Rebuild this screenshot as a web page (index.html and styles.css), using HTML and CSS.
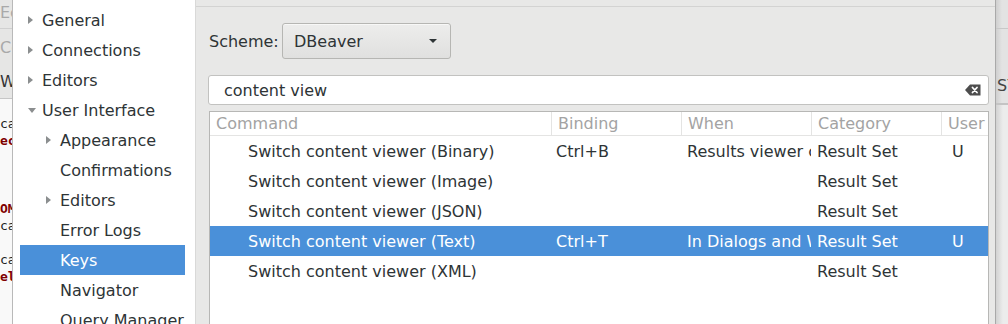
FILE: index.html
```html
<!DOCTYPE html>
<html>
<head>
<meta charset="utf-8">
<link rel="stylesheet" href="styles.css">
</head>
<body>
<div class="screen">
  <div class="bg-left">
    <div class="bg-top">
      <div class="bg-tab faded first">Ec</div>
      <div class="bg-tab faded second">Cc</div>
      <div class="bg-tab dark">W</div>
    </div>
    <div class="bg-code">
      <div class="code-line">ca</div>
      <div class="code-line kw">ec</div>
      <div class="code-line"></div>
      <div class="code-line"></div>
      <div class="code-line"></div>
      <div class="code-line kw">OM</div>
      <div class="code-line">ca</div>
      <div class="code-line"></div>
      <div class="code-line">ca</div>
      <div class="code-line kw">el</div>
    </div>
  </div>

  <div class="tree">
    <div class="row lvl1"><span class="arrow right"></span>General</div>
    <div class="row lvl1"><span class="arrow right"></span>Connections</div>
    <div class="row lvl1"><span class="arrow right"></span>Editors</div>
    <div class="row lvl1"><span class="arrow down"></span>User Interface</div>
    <div class="row lvl2"><span class="arrow right"></span>Appearance</div>
    <div class="row lvl2"><span class="arrow none"></span>Confirmations</div>
    <div class="row lvl2"><span class="arrow right"></span>Editors</div>
    <div class="row lvl2"><span class="arrow none"></span>Error Logs</div>
    <div class="row lvl2 selected"><span class="arrow none"></span>Keys</div>
    <div class="row lvl2"><span class="arrow none"></span>Navigator</div>
    <div class="row lvl2"><span class="arrow none"></span>Query Manager</div>
  </div>

  <div class="main">
    <div class="main-top"></div>
    <div class="scheme-row">
      <span class="label">Scheme:</span>
      <div class="combo">
        <span>DBeaver</span>
        <span class="combo-arrow"></span>
      </div>
    </div>
    <div class="search">
      <span class="search-text">content view</span>
      <svg class="clear-icon" width="16" height="12" viewBox="0 0 16 12">
        <path d="M0 6 L5 0.5 L15.5 0.5 L15.5 11.5 L5 11.5 Z" fill="#4d4d4d"/>
        <path d="M7.5 3.5 L12 8.5 M12 3.5 L7.5 8.5" stroke="#fff" stroke-width="1.8" stroke-linecap="round"/>
      </svg>
    </div>
    <div class="table">
      <div class="thead">
        <div class="th c1">Command</div>
        <div class="th c2">Binding</div>
        <div class="th c3">When</div>
        <div class="th c4">Category</div>
        <div class="th c5">User</div>
      </div>
      <div class="tr">
        <div class="td c1">Switch content viewer (Binary)</div>
        <div class="td c2">Ctrl+B</div>
        <div class="td c3">Results viewer context</div>
        <div class="td c4">Result Set</div>
        <div class="td c5">U</div>
      </div>
      <div class="tr">
        <div class="td c1">Switch content viewer (Image)</div>
        <div class="td c2"></div>
        <div class="td c3"></div>
        <div class="td c4">Result Set</div>
        <div class="td c5"></div>
      </div>
      <div class="tr">
        <div class="td c1">Switch content viewer (JSON)</div>
        <div class="td c2"></div>
        <div class="td c3"></div>
        <div class="td c4">Result Set</div>
        <div class="td c5"></div>
      </div>
      <div class="tr selected">
        <div class="td c1">Switch content viewer (Text)</div>
        <div class="td c2">Ctrl+T</div>
        <div class="td c3">In Dialogs and Windows</div>
        <div class="td c4">Result Set</div>
        <div class="td c5">U</div>
      </div>
      <div class="tr">
        <div class="td c1">Switch content viewer (XML)</div>
        <div class="td c2"></div>
        <div class="td c3"></div>
        <div class="td c4">Result Set</div>
        <div class="td c5"></div>
      </div>
    </div>
  </div>

  <div class="bg-right">
    <div class="bgr-top">
      <div class="bgr-band"></div>
      <div class="bgr-tab">SY</div>
    </div>
    <div class="bgr-body"></div>
  </div>
</div>
</body>
</html>
```

FILE: styles.css
```css
* { box-sizing: border-box; }
html, body { margin: 0; padding: 0; }
body {
  width: 1008px;
  height: 324px;
  overflow: hidden;
  font-family: "DejaVu Sans", "Noto Sans", sans-serif;
  font-size: 16px;
  color: #2e3436;
  background: #ffffff;
}
.screen {
  display: flex;
  width: 1008px;
  height: 324px;
  overflow: hidden;
}

/* background application, left */
.bg-left {
  width: 13px;
  flex: none;
  display: flex;
  flex-direction: column;
  overflow: hidden;
  border-right: 1px solid #b9b9b9;
  box-shadow: inset -3px 0 3px -2px rgba(0,0,0,0.18);
}
.bg-top {
  height: 99px;
  background: #e6e6e5;
  border-bottom: 1px solid #c6c6c6;
  display: flex;
  flex-direction: column;
}
.bg-tab {
  white-space: nowrap;
  overflow: hidden;
  font-size: 16px;
}
.bg-tab.first {
  height: 29px;
  line-height: 26px;
  border-bottom: 1px solid #d0d0d0;
}
.bg-tab.second {
  height: 36px;
  line-height: 38px;
}
.bg-tab.faded { color: #a9a9a9; }
.bg-tab.dark { color: #333; flex: 1; line-height: 34px; }
.bg-code {
  flex: 1;
  background: #f9f9f9;
  padding-top: 16px;
  font-family: "DejaVu Sans Mono", monospace;
  font-size: 13px;
}
.code-line {
  height: 17px;
  line-height: 17px;
  white-space: nowrap;
  overflow: hidden;
  color: #222;
}
.code-line.kw { color: #7f0000; font-weight: bold; }

/* tree */
.tree {
  width: 183px;
  flex: none;
  background: #ffffff;
  padding: 5px 10px 0 7px;
  border-right: 1px solid #d9d9d8;
}
.row {
  height: 30px;
  display: flex;
  align-items: center;
  white-space: nowrap;
}
.row.lvl1 { padding-left: 8px; }
.row.lvl2 { padding-left: 26px; }
.row.selected { background: #4a90d9; color: #ffffff; }
.arrow {
  width: 14px;
  flex: none;
  height: 10px;
  position: relative;
}
.arrow.right::before {
  content: "";
  position: absolute;
  left: 0;
  top: 1px;
  border-style: solid;
  border-width: 4px 0 4px 5px;
  border-color: transparent transparent transparent #8b8e8f;
}
.arrow.down::before {
  content: "";
  position: absolute;
  left: 0;
  top: 3px;
  border-style: solid;
  border-width: 5px 4px 0 4px;
  border-color: #8b8e8f transparent transparent transparent;
}

/* main panel */
.main {
  flex: 1;
  background: #e8e8e7;
  padding: 0 6px 0 12px;
  display: flex;
  flex-direction: column;
  min-width: 0;
}
.main-top {
  height: 7px;
  margin: 0 -6px 0 -12px;
  border-bottom: 1px solid #d3d3d2;
  flex: none;
}
.scheme-row {
  display: flex;
  align-items: center;
  margin-top: 16px;
  height: 36px;
  flex: none;
}
.label { padding-left: 1px; width: 74px; white-space: nowrap; }
.combo {
  width: 169px;
  height: 36px;
  border: 1px solid #b6b6b3;
  border-radius: 3px;
  background: linear-gradient(#ededec, #e0e0df);
  display: flex;
  align-items: center;
  justify-content: space-between;
  padding: 0 13px 0 11px;
  box-shadow: 0 1px 0 rgba(255,255,255,0.6) inset;
}
.combo-arrow {
  width: 0;
  height: 0;
  border-style: solid;
  border-width: 4px 4px 0 4px;
  border-color: #2e3436 transparent transparent transparent;
}
.search {
  margin-top: 16px;
  height: 30px;
  flex: none;
  background: #ffffff;
  border: 1px solid #c2c2c0;
  border-radius: 3px;
  display: flex;
  align-items: center;
  justify-content: space-between;
  padding: 0 7px 0 15px;
}
.clear-icon { display: block; }

/* table */
.table {
  margin-top: 6px;
  margin-left: 1px;
  flex: 1;
  background: #ffffff;
  border: 1px solid #b7b7b5;
  border-bottom: none;
  margin-right: 0;
  overflow: hidden;
}
.thead, .tr {
  display: grid;
  grid-template-columns: 341px 130px 130px 130px 1fr;
}
.thead {
  height: 24px;
  border-bottom: 1px solid #e4e4e3;
  color: #a3a3a3;
}
.th {
  line-height: 23px;
  padding-left: 6px;
  white-space: nowrap;
  overflow: hidden;
}
.th.c2, .th.c3, .th.c4, .th.c5 { border-left: 1px solid #e4e4e3; }
.tr { height: 30px; }
.td {
  line-height: 31px;
  white-space: nowrap;
  overflow: hidden;
}
.td.c1 { padding-left: 38px; }
.td.c2 { padding-left: 5px; }
.td.c3 { padding-left: 6px; }
.td.c4 { padding-left: 6px; }
.td.c5 { padding-left: 11px; }
.tr.selected { background: #4a90d9; color: #ffffff; }

/* background application, right */
.bg-right {
  width: 13px;
  flex: none;
  display: flex;
  flex-direction: column;
  border-left: 1px solid #a9a9a9;
  overflow: hidden;
}
.bgr-top {
  height: 105px;
  background: linear-gradient(90deg, #cfcfcf, #e3e3e3 6px);
  border-bottom: 2px solid #c4c4c4;
  display: flex;
  flex-direction: column;
}
.bgr-band {
  height: 29px;
  border-bottom: 1px solid #c8c8c8;
}
.bgr-tab {
  margin-top: 46px;
  font-size: 16px;
  line-height: 22px;
  color: #444;
  white-space: nowrap;
  overflow: hidden;
  padding-left: 1px;
}
.bgr-body {
  flex: 1;
  background: linear-gradient(90deg, #d2d2d2, #ececec 7px);
}
```
